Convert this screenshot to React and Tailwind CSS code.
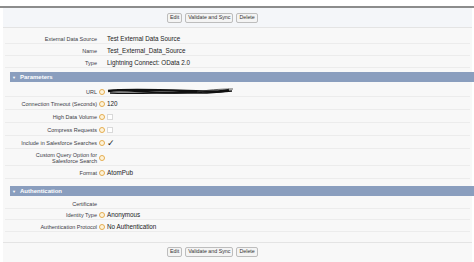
import React from 'react';

const HelpIcon = () => (
  <span className="inline-block w-[6px] h-[6px] rounded-full border border-[#e5ad4f] bg-[#fdf3da]" />
);

const Btn = ({ children }) => (
  <button className="h-[10px] px-[2px] border border-[#bdbdbd] rounded-[2px] bg-[#f4f4f4] text-[5.3px] text-[#333] leading-none">
    {children}
  </button>
);

const Buttons = () => (
  <div className="flex gap-[3px] pl-[164px] items-center">
    <Btn>Edit</Btn>
    <Btn>Validate and Sync</Btn>
    <Btn>Delete</Btn>
  </div>
);

const Row = ({ label, help, children, h = 'h-[12px]' }) => (
  <div className={`flex items-center border-b border-[#ececec] ${h}`}>
    <div className="w-[92px] pt-[2px] text-right text-[5.5px] leading-[6px] text-[#3c3c46]">{label}</div>
    <div className="w-[10px] flex items-center justify-center pt-[2px]">{help && <HelpIcon />}</div>
    <div className="pt-[2px] text-[6.3px] text-[#222] flex items-center">{children}</div>
  </div>
);

const Section = ({ title }) => (
  <div className="h-[10px] ml-[5px] mr-[-4px] bg-[#8a9ebe] flex items-center pl-[2px] pt-[1px] text-white text-[6px] font-bold gap-[4px]">
    <span className="text-[4px]">▼</span>
    {title}
  </div>
);

const Box = () => <span className="inline-block w-[6px] h-[6px] border border-[#d9d9d9] bg-white" />;

export default function App() {
  return (
    <div className="w-[474px] h-[262px] bg-white overflow-hidden" style={{ fontFamily: '"Liberation Sans", Arial, sans-serif' }}>
      <div className="h-[6px]" />
      <div className="h-[2px] bg-[#8c8c8c]" />
      <div className="ml-[3px] w-[469px] h-[254px] bg-[#f8f8f8] flex flex-col">
        <div className="h-[20px] bg-[#f4f6f9] flex items-center border-b border-[#e4e4e4]">
          <Buttons />
        </div>
        <div className="pt-[4px] px-[2px]">
          <Row label="External Data Source">Test External Data Source</Row>
          <Row label="Name">Test_External_Data_Source</Row>
          <Row label="Type">Lightning Connect: OData 2.0</Row>
        </div>
        <div className="mt-[4px] mx-[2px]">
          <Section title="Parameters" />
          <div className="pt-[3px]">
            <Row label="URL" help>
              <svg width="128" height="9" viewBox="0 0 128 9">
                <path d="M1 4 C20 2 50 3 80 4 S 110 5 122 3" stroke="#111" strokeWidth="2.6" fill="none" />
                <path d="M3 6 C30 7 70 5 100 6 L125 4" stroke="#111" strokeWidth="1.6" fill="none" />
                <path d="M10 3 C40 5 60 7 95 5" stroke="#111" strokeWidth="1.8" fill="none" />
                <path d="M90 5 C100 3 112 2 126 2" stroke="#333" strokeWidth="0.8" fill="none" />
              </svg>
            </Row>
            <Row label="Connection Timeout (Seconds)" help h="h-[13px]">120</Row>
            <Row label="High Data Volume" help h="h-[13px]"><Box /></Row>
            <Row label="Compress Requests" help h="h-[13px]"><Box /></Row>
            <Row label="Include in Salesforce Searches" help h="h-[13px]">
              <span className="text-[9px] leading-none">✓</span>
            </Row>
            <Row label={<>Custom Query Option for<br />Salesforce Search</>} help h="h-[17px]" />
            <Row label="Format" help h="h-[13px]">AtomPub</Row>
          </div>
        </div>
        <div className="mt-[7px] mx-[2px]">
          <Section title="Authentication" />
          <div className="pt-[1px]">
            <Row label="Certificate" />
            <Row label="Identity Type" help h="h-[11px]">Anonymous</Row>
            <Row label="Authentication Protocol" help>No Authentication</Row>
          </div>
        </div>
        <div className="mt-[10px] border-t border-[#e4e4e4] h-[18px] flex items-center">
          <Buttons />
        </div>
      </div>
    </div>
  );
}
